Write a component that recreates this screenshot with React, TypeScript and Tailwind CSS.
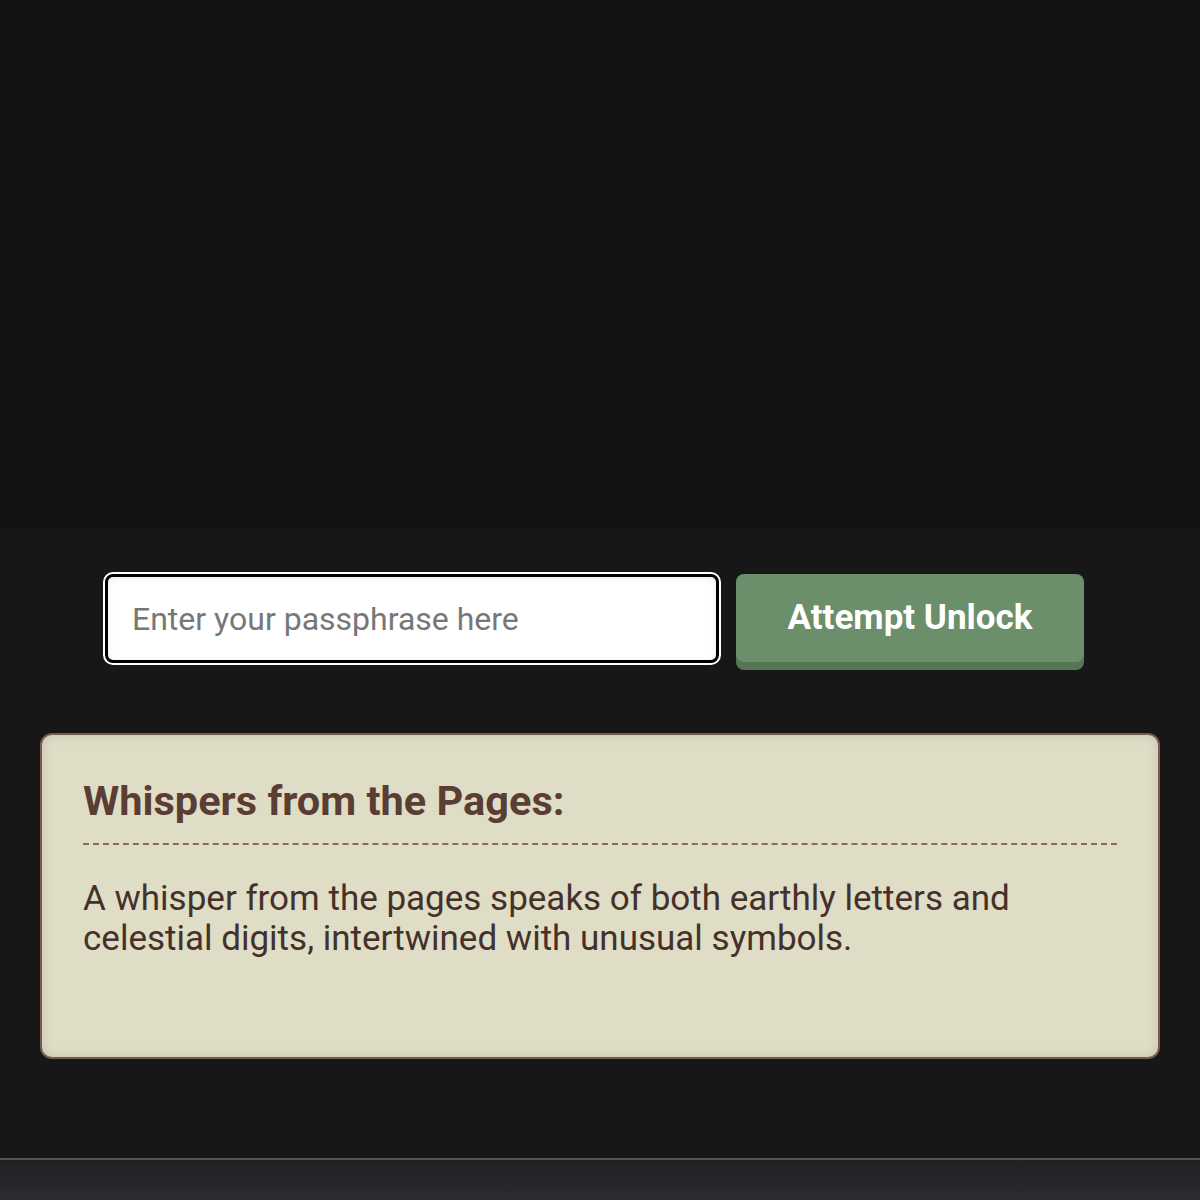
import React from 'react';

const App = () => {
  return (
    <div className="min-h-[1200px] w-full bg-[#171717] flex flex-col" style={{ fontFamily: 'Roboto, "Liberation Sans", sans-serif' }}>
      <div className="h-[528px] bg-[#121212]" />
      <main className="flex-1 px-10 pt-[46px]">
        <form className="flex items-start gap-[17px] pl-[65px]" onSubmit={(e) => e.preventDefault()}>
          <input
            type="text"
            placeholder="Enter your passphrase here"
            className="w-[614px] h-[89px] rounded-[8px] border-[3px] border-black bg-white px-[24px] text-[32px] text-[#222] placeholder:text-[#777] outline-2 outline-white outline-offset-0 shadow-[inset_0_2px_6px_rgba(0,0,0,0.08)]"
          />
          <button
            type="submit"
            className="w-[348px] h-[88px] rounded-[8px] bg-[#6a8f6a] text-white text-[35px] font-bold shadow-[0_8px_0_#557555]"
          >
            Attempt Unlock
          </button>
        </form>
        <section className="mt-[70px] h-[326px] rounded-[12px] border-2 border-[#7a5a4e] bg-[#dfddc6] px-[41px] pt-[42px] shadow-[inset_0_0_12px_rgba(0,0,0,0.12)]">
          <h2 className="text-[41.5px] font-bold leading-[48px] text-[#5a3d33] pb-[18px] border-b-2 border-dashed border-[#8a6a5c]">
            Whispers from the Pages:
          </h2>
          <p className="mt-[34px] text-[35px] leading-[40px] text-[#45302a] max-w-[1000px]">
            A whisper from the pages speaks of both earthly letters and celestial digits, intertwined with unusual symbols.
          </p>
        </section>
      </main>
      <footer className="h-[42px] mt-[92px] border-t-2 border-[#555] bg-gradient-to-b from-[#1e2022] to-[#2b2d30]" />
    </div>
  );
};

export default App;
